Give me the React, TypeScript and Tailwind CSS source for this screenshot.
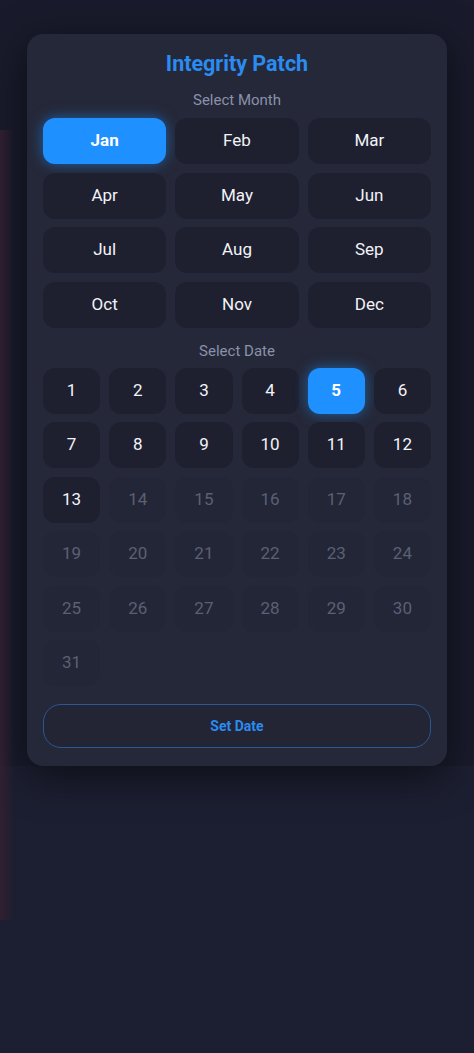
import React from "react";

const months = ["Jan","Feb","Mar","Apr","May","Jun","Jul","Aug","Sep","Oct","Nov","Dec"];
const days = Array.from({ length: 31 }, (_, i) => i + 1);

export default function App() {
  return (
    <div className="relative min-h-[1053px] w-[474px] overflow-hidden bg-[#1c1f31]" style={{ fontFamily: "Roboto, 'Liberation Sans', sans-serif" }}>
      <div className="relative h-[766px] bg-[#17192a]/60 pt-[34px]">
        <div className="mx-[27px] w-[420px] rounded-2xl bg-[#252838] px-4 pb-[18px] pt-4 shadow-[0_10px_40px_rgba(0,0,0,0.55)]">
          <h1 className="text-center text-[21.5px] font-bold leading-7 text-[#2a8cf0]">Integrity Patch</h1>
          <p className="mt-3 text-center text-[15px] leading-5 text-[#8a91ab]">Select Month</p>
          <div className="mt-2 grid grid-cols-3 gap-x-[9px] gap-y-[8.5px]">
            {months.map((m, i) => (
              <div
                key={m}
                className={
                  i === 0
                    ? "flex h-[46px] items-center justify-center rounded-xl bg-[#1e90ff] text-[17px] font-bold text-white shadow-[0_0_14px_rgba(30,144,255,0.55)]"
                    : "flex h-[46px] items-center justify-center rounded-xl bg-[#1e2030] text-[17px] text-[#f2f3f7]"
                }
              >
                {m}
              </div>
            ))}
          </div>
          <p className="mt-[13px] text-center text-[15px] leading-5 text-[#8a91ab]">Select Date</p>
          <div className="mt-[7px] grid grid-cols-6 gap-x-[9px] gap-y-[8.5px]">
            {days.map((d) => {
              let cls = "flex h-[46px] items-center justify-center rounded-xl text-[17px] ";
              if (d === 5) cls += "bg-[#1e90ff] font-bold text-white shadow-[0_0_14px_rgba(30,144,255,0.55)]";
              else if (d <= 13) cls += "bg-[#1e2030] text-[#f2f3f7]";
              else cls += "bg-[#232636] text-[#5b6073]";
              return (
                <div key={d} className={cls}>
                  {d}
                </div>
              );
            })}
          </div>
          <button className="mt-[18px] flex h-[44px] w-full items-center justify-center rounded-[18px] border border-[#2b5793] bg-[#232535] text-[14px] font-bold text-[#2a8cf0]">
            Set Date
          </button>
        </div>
      </div>
      <div className="pointer-events-none absolute left-0 top-[130px] h-[790px] w-[14px] bg-gradient-to-r from-[#3a2030]/70 to-transparent" />
    </div>
  );
}
